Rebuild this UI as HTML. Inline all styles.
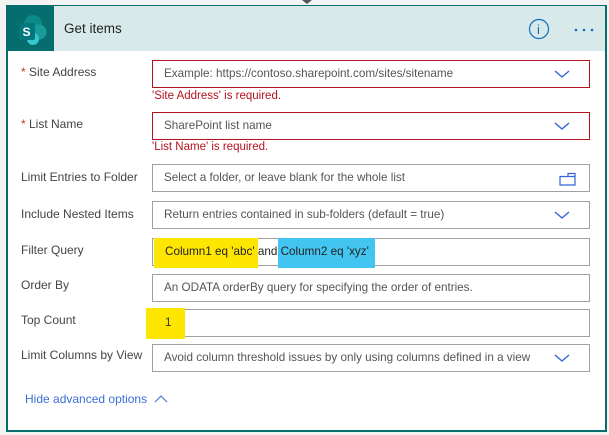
<!DOCTYPE html>
<html><head><style>
body{margin:0;width:609px;height:435px;background:#f3f3f3;font-family:"Segoe UI","Liberation Sans",sans-serif;overflow:hidden;position:relative}
.card{position:absolute;left:6px;top:5px;width:597px;height:424px;border:2px solid #056d6d;border-top-width:1px;background:#fff}
.hdr{position:absolute;left:0;top:0;width:597px;height:45px;background:#d8e9e9}
.ico{position:absolute;left:0;top:0;width:46px;height:45px;background:#056d6d}
.title{position:absolute;left:56px;top:15px;font-size:13.5px;color:#222}
.lbl{position:absolute;left:15px;font-size:12px;color:#444}
.lbl b{color:#c0392b;font-weight:normal}
.in{position:absolute;left:146px;width:436px;height:26px;border:1px solid #a0a0a0;box-sizing:content-box;font-size:11.7px;color:#555;line-height:26px;padding-left:0;white-space:nowrap}
.in span.t{position:absolute;left:11px}
.in.err{border-color:#b3121e}
.em{position:absolute;left:147px;font-size:11.5px;color:#b3121e}
.chev{position:absolute;right:18px;top:9px}
</style></head><body>
<svg style="position:absolute;left:300px;top:0" width="14" height="5"><path d="M2 0L7 4L12 0Z" fill="#555"/></svg>
<div class="card">
<div class="hdr">
<div class="ico"><svg width="46" height="45">
<circle cx="25" cy="18" r="9" fill="#0b8a8a"/><circle cx="31" cy="26" r="7.5" fill="#1a9b9b"/><circle cx="25" cy="33" r="6" fill="#37c6d0"/>
<rect x="11" y="17" width="16" height="17" rx="2" fill="#03787c"/><text x="14.5" y="30" font-size="12" font-weight="bold" fill="#fff" font-family="Liberation Sans">S</text></svg></div>
<div class="title">Get items</div>
<svg style="position:absolute;left:520px;top:12px" width="22" height="22"><circle cx="11" cy="11" r="9.5" fill="none" stroke="#0f6cbd" stroke-width="1.2"/><text x="9" y="16" font-size="13" fill="#0f6cbd" font-family="Liberation Sans">i</text></svg>
<svg style="position:absolute;left:566px;top:22px" width="24" height="4"><circle cx="2" cy="2" r="1.3" fill="#0f6cbd"/><circle cx="10" cy="2" r="1.3" fill="#0f6cbd"/><circle cx="18" cy="2" r="1.3" fill="#0f6cbd"/></svg>
</div>
</div>
<svg width="0" height="0"><defs><path id="cv" d="M1 1L8 7L15 1" fill="none" stroke="#3563d8" stroke-width="1.4"/></defs></svg>

<div class="lbl" style="left:21px;top:65px"><b>*</b> Site Address</div>
<div class="in err" style="left:152px;top:60px"><span class="t">Example: https://contoso.sharepoint.com/sites/sitename</span><svg class="chev" width="17" height="9"><use href="#cv"/></svg></div>
<div class="em" style="left:152px;top:90px">'Site Address' is required.</div>

<div class="lbl" style="left:21px;top:117px"><b>*</b> List Name</div>
<div class="in err" style="left:152px;top:112px"><span class="t">SharePoint list name</span><svg class="chev" width="17" height="9"><use href="#cv"/></svg></div>
<div class="em" style="left:152px;top:141px">'List Name' is required.</div>

<div class="lbl" style="left:21px;top:170px">Limit Entries to Folder</div>
<div class="in" style="left:152px;top:164px"><span class="t">Select a folder, or leave blank for the whole list</span><svg style="position:absolute;right:13px;top:7px" width="17" height="14"><path d="M1 4.5H16V13H1Z M9 4.5V1.5H16V4.5" fill="none" stroke="#3563d8" stroke-width="1.2"/></svg></div>

<div class="lbl" style="left:21px;top:207px">Include Nested Items</div>
<div class="in" style="left:152px;top:201px"><span class="t">Return entries contained in sub-folders (default = true)</span><svg class="chev" width="17" height="9"><use href="#cv"/></svg></div>

<div class="lbl" style="left:21px;top:243px">Filter Query</div>
<div class="in" style="left:152px;top:238px;color:#222"><span style="position:absolute;left:1px;top:-1px;width:104px;height:30px;background:#ffe600"></span><span style="position:absolute;left:125px;top:-1px;width:97px;height:30px;background:#42c5f0"></span><span class="t" style="left:12px">Column1 eq 'abc' and Column2 eq 'xyz'</span></div>

<div class="lbl" style="left:21px;top:278px">Order By</div>
<div class="in" style="left:152px;top:274px"><span class="t">An ODATA orderBy query for specifying the order of entries.</span></div>

<div class="lbl" style="left:21px;top:313px">Top Count</div>
<div class="in" style="left:152px;top:309px;color:#333"><span style="position:absolute;left:-7px;top:-2px;width:39px;height:31px;background:#ffe600"></span><span class="t" style="left:12px">1</span></div>

<div class="lbl" style="left:21px;top:348px">Limit Columns by View</div>
<div class="in" style="left:152px;top:344px"><span class="t">Avoid column threshold issues by only using columns defined in a view</span><svg class="chev" width="17" height="9"><use href="#cv"/></svg></div>

<div style="position:absolute;left:25px;top:392px;font-size:12px;color:#3a6fd8">Hide advanced options <svg width="14" height="9" style="margin-left:4px"><path d="M1 8L7 2L13 8" fill="none" stroke="#3a6fd8" stroke-width="1.1"/></svg></div>
</body></html>
